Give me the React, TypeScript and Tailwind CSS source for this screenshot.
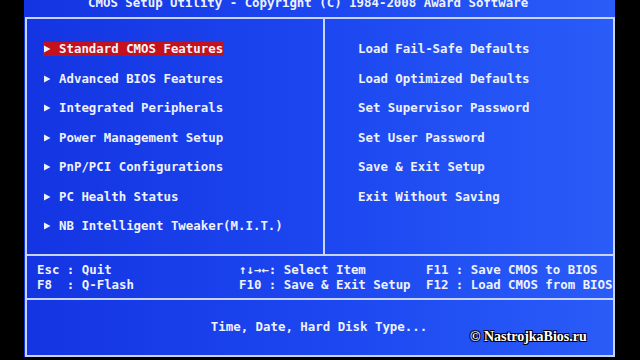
import React from 'react';

const MONO = "font-['DejaVu_Sans_Mono','Liberation_Mono',monospace]";

const leftItems = [
  'Standard CMOS Features',
  'Advanced BIOS Features',
  'Integrated Peripherals',
  'Power Management Setup',
  'PnP/PCI Configurations',
  'PC Health Status',
  'NB Intelligent Tweaker(M.I.T.)',
];

const rightItems = [
  'Load Fail-Safe Defaults',
  'Load Optimized Defaults',
  'Set Supervisor Password',
  'Set User Password',
  'Save & Exit Setup',
  'Exit Without Saving',
];

function Arrow() {
  return (
    <svg width="7" height="8" viewBox="0 0 7 8" className="shrink-0">
      <path d="M0 0.5 L6.5 4 L0 7.5 Z" fill="#eef2ff" />
    </svg>
  );
}

function MenuItem({ label, active }: { label: string; active?: boolean }) {
  return (
    <div className="flex h-[14px] items-center">
      <div
        className={`flex h-[14px] items-center pl-px ${active ? 'bg-[#c4121c]' : ''}`}
      >
        <Arrow />
        <span className="ml-[8px] whitespace-pre">{label}</span>
      </div>
    </div>
  );
}

export default function App() {
  return (
    <div
      className={`flex h-[360px] w-[640px] overflow-hidden bg-black text-[12.4px] font-bold leading-[14px] text-[#eef2fc] ${MONO}`}
    >
      <div className="relative ml-[24px] flex h-[357px] w-[591px] flex-col bg-gradient-to-r from-[#1434e2] via-[#1c46f0] to-[#2a5cf8]">
        {/* title, cut by the top of the picture */}
        <div className="h-[17px] overflow-hidden">
          <div className="mt-[-4px] pl-[64px] whitespace-pre">
            CMOS Setup Utility - Copyright (C) 1984-2008 Award Software
          </div>
        </div>

        <div className="ml-px flex flex-1 flex-col border-2 border-[#c6d4ff]">
          {/* menus */}
          <div className="flex h-[235px]">
            <div className="flex w-[298px] flex-col gap-[15.5px] border-r-2 border-[#c6d4ff] pt-[23px] pl-[16px]">
              {leftItems.map((item, i) => (
                <MenuItem key={item} label={item} active={i === 0} />
              ))}
            </div>
            <div className="flex flex-1 flex-col gap-[15.5px] pt-[23px] pl-[33px]">
              {rightItems.map((item) => (
                <div key={item} className="flex h-[14px] items-center whitespace-pre">
                  {item}
                </div>
              ))}
            </div>
          </div>

          {/* keys */}
          <div className="flex h-[46px] border-y-2 border-[#c6d4ff] pt-[7px] pl-[10px]">
            <div className="flex w-[202px] flex-col leading-[14.5px] whitespace-pre">
              <span>Esc : Quit</span>
              <span>F8  : Q-Flash</span>
            </div>
            <div className="flex w-[187px] flex-col leading-[14.5px] whitespace-pre">
              <span>↑↓→←: Select Item</span>
              <span>F10 : Save &amp; Exit Setup</span>
            </div>
            <div className="flex flex-1 flex-col leading-[14.5px] whitespace-pre">
              <span>F11 : Save CMOS to BIOS</span>
              <span>F12 : Load CMOS from BIOS</span>
            </div>
          </div>

          {/* help line */}
          <div className="flex flex-1 items-center justify-center pr-[2px] pb-[1px] whitespace-pre">
            Time, Date, Hard Disk Type...
          </div>
        </div>

        <div className="absolute top-[329px] left-[446px] font-['Liberation_Serif',serif] text-[14px] font-bold leading-[16px] text-white [text-shadow:1px_1px_0_#000,-1px_-1px_0_#000,1px_-1px_0_#000,-1px_1px_0_#000]">
          © NastrojkaBios.ru
        </div>
      </div>
    </div>
  );
}
